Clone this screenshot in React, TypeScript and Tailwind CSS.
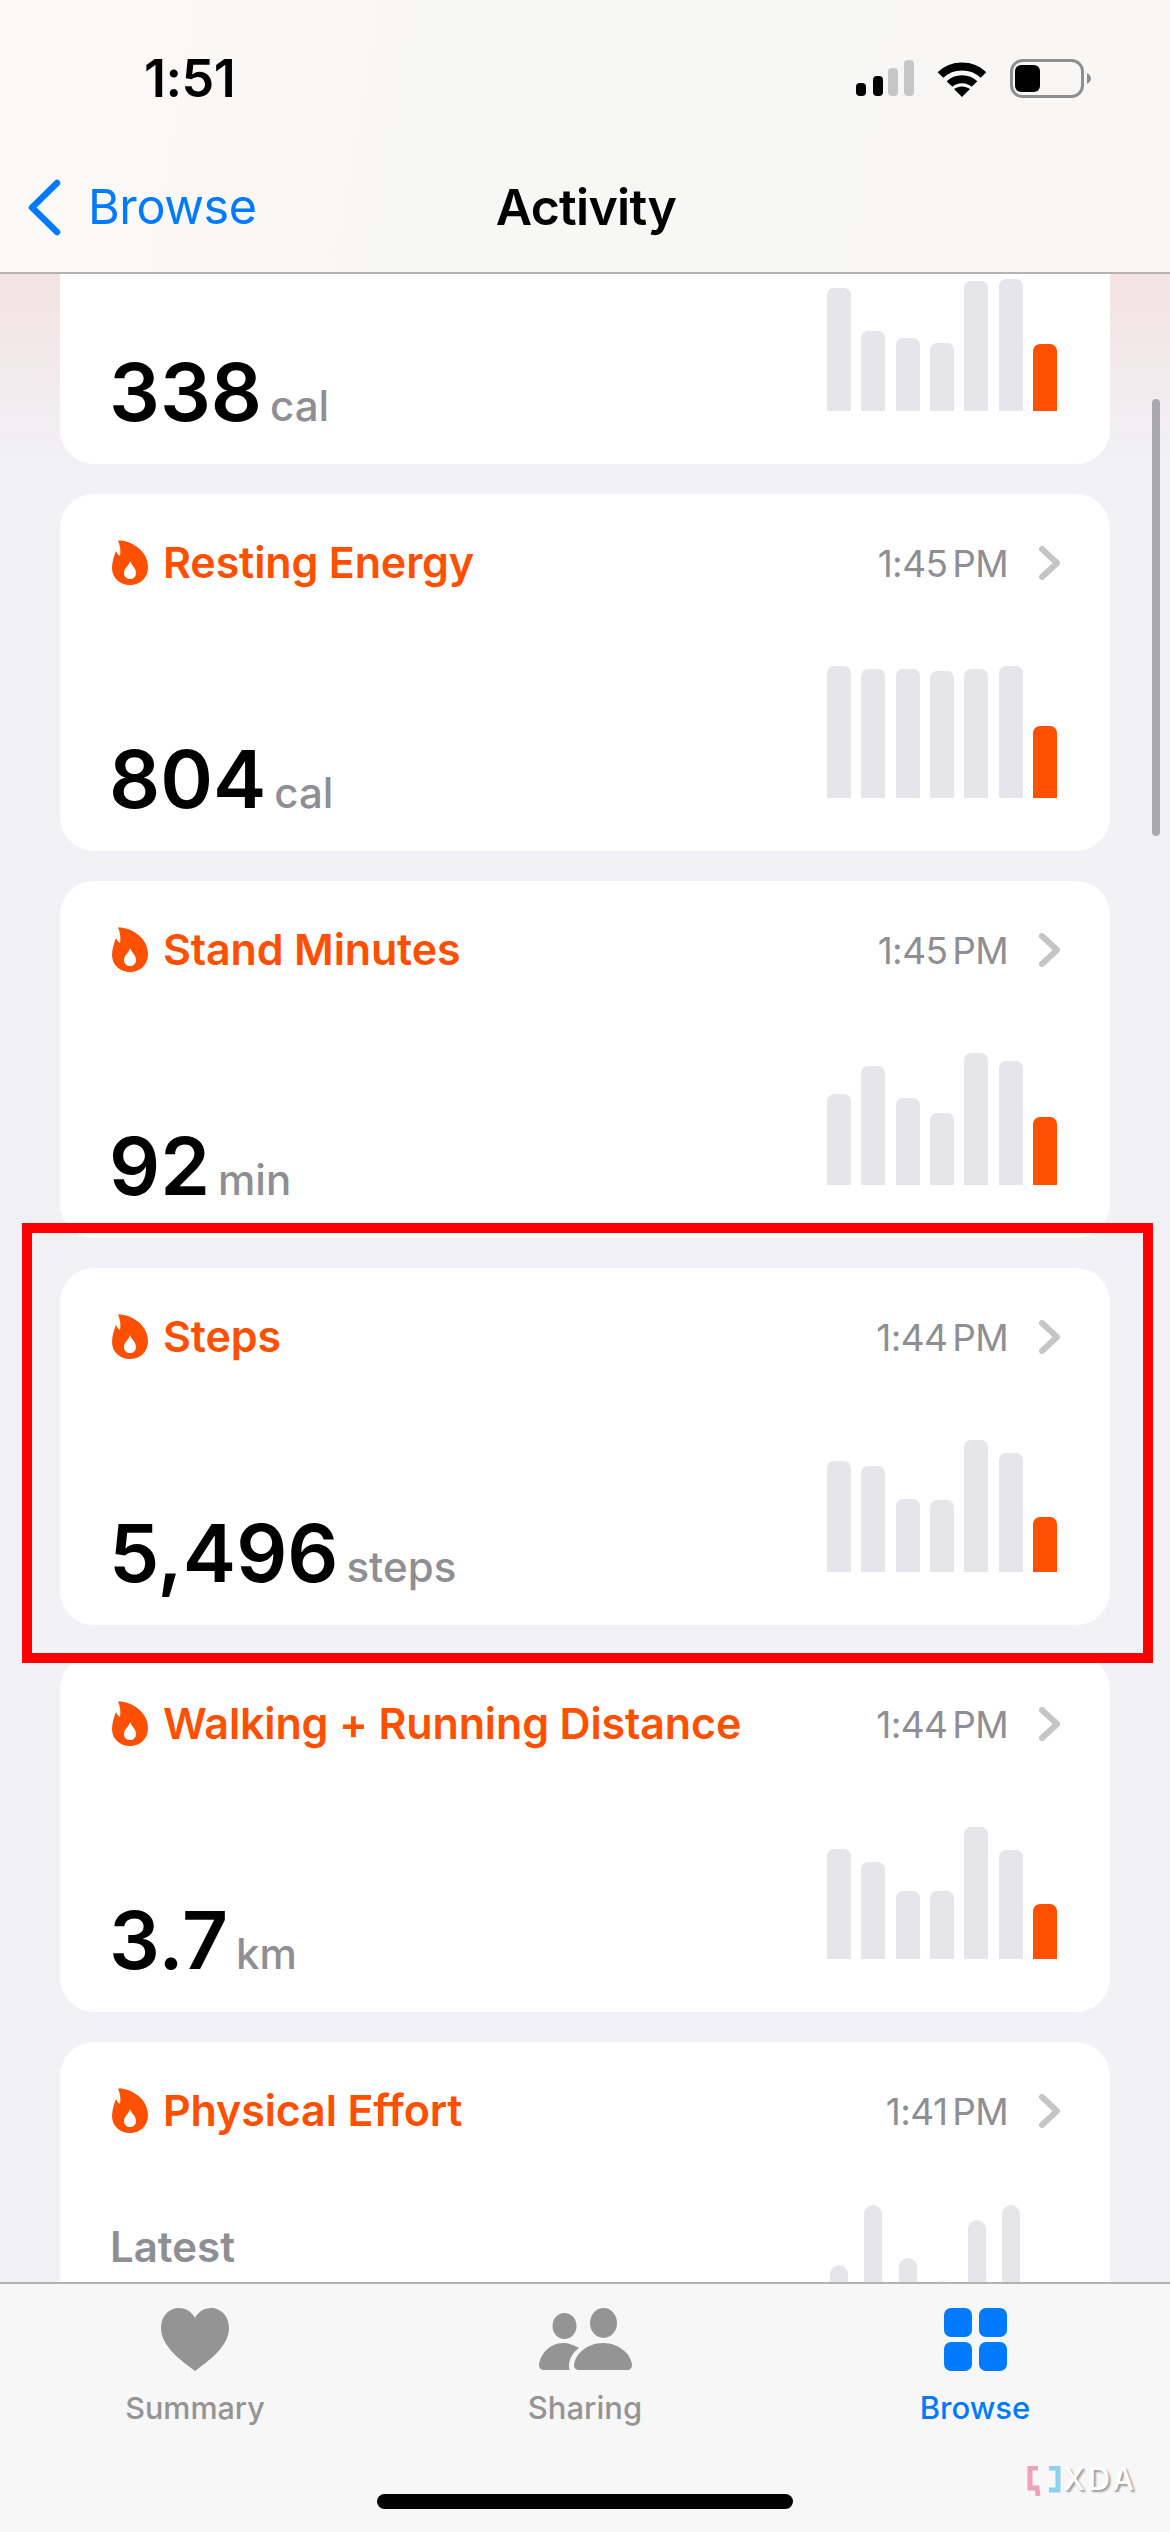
const metrics = [
  { title: "Resting Energy", time: "1:45 PM", value: "804", unit: "cal", bars: [132, 129, 129, 127, 129, 132, 72] },
  { title: "Stand Minutes", time: "1:45 PM", value: "92", unit: "min", bars: [91, 119, 87, 72, 132, 124, 68] },
  { title: "Steps", time: "1:44 PM", value: "5,496", unit: "steps", bars: [111, 106, 73, 72, 132, 119, 55] },
  { title: "Walking + Running Distance", time: "1:44 PM", value: "3.7", unit: "km", bars: [110, 97, 68, 68, 132, 109, 55] },
];

const effortBars = [81, 141, 88, 65, 126, 141];

function Flame() {
  return (
    <svg width="36" height="45" viewBox="0 0 36 45" className="shrink-0">
      <path
        fill="#ff4f00"
        fillRule="evenodd"
        d="M6 0.5C18 0 36 10 36 27C36 38 28 45 18 45C8 45 0 38 0 28C0 22 2 16 4 11C5 13 6 15 8 16C9 11 8 5 6 0.5ZM18 21C17 26 12 28 12 33C12 37 15 39 18 39C21 39 24 37 24 33C24 28 20 26 18 21Z"
      />
    </svg>
  );
}

function CardHeader({ title, time }: { title: string; time: string }) {
  return (
    <div className="flex items-center h-[46px]">
      <Flame />
      <span className="ml-[15px] text-[43px] leading-[46px] tracking-[-0.15px] font-semibold text-[#ff4f00] whitespace-nowrap">{title}</span>
      <span className="ml-auto mt-[3px] text-[37px] leading-[46px] tracking-[-0.6px] [word-spacing:-5px] text-[#8e8e93]">{time}</span>
      <svg width="21" height="34" viewBox="0 0 21 34" className="ml-[31px] mt-[2px]" fill="none">
        <path d="M3 3L18 17L3 31" stroke="#c5c5c7" strokeWidth="6" strokeLinecap="round" strokeLinejoin="round" />
      </svg>
    </div>
  );
}

function Bars({ bars }: { bars: number[] }) {
  return (
    <div className="flex items-end gap-[10.33px] mb-[23px] mr-[3px]">
      {bars.map((h, i) => (
        <div
          key={i}
          className={`w-[24px] rounded-t-[7px] ${i === bars.length - 1 ? "bg-[#ff4f00]" : "bg-[#e5e5ea]"}`}
          style={{ height: h }}
        />
      ))}
    </div>
  );
}

function Value({ value, unit }: { value: string; unit: string }) {
  return (
    <div className="flex items-baseline h-[88px] -ml-[3px] -mb-[2px] leading-[88px] whitespace-nowrap">
      <span className="text-[80px] font-semibold text-black">{value}</span>
      <span className="ml-[8px] text-[42px] font-medium text-[#8e8e93]">{unit}</span>
    </div>
  );
}

function MetricCard({ title, time, value, unit, bars }: (typeof metrics)[number]) {
  return (
    <div className="h-[357px] shrink-0 rounded-[34px] bg-white pt-[45px] pb-[30px] pl-[52px] pr-[50px] flex flex-col justify-between">
      <CardHeader title={title} time={time} />
      <div className="flex items-end justify-between">
        <Value value={value} unit={unit} />
        <Bars bars={bars} />
      </div>
    </div>
  );
}

export default function App() {
  return (
    <div className="relative w-[1170px] h-[2532px] overflow-hidden flex flex-col bg-[#f1f1f6] font-['Inter','Liberation_Sans',sans-serif]">
      {/* status bar + nav */}
      <header className="h-[274px] shrink-0 border-b-2 border-[#b5b2b1] bg-[linear-gradient(100deg,#fdf9f7,#f7f7f6_40%,#f8f7f6)]">
        <div className="h-[156px] flex items-center justify-between pl-[144px] pr-[79px]">
          <span className="pt-[2px] text-[52px] font-semibold tracking-[-0.5px] text-black">1:51</span>
          <div className="flex items-center">
            <svg width="58" height="36" viewBox="0 0 58 36">
              <rect x="0" y="23" width="10" height="13" rx="4" fill="#000" />
              <rect x="17" y="16" width="10" height="20" rx="4" fill="#000" />
              <rect x="32" y="8" width="10" height="28" rx="4" fill="#c6c6c6" />
              <rect x="48" y="0" width="10" height="36" rx="4" fill="#c6c6c6" />
            </svg>
            <svg width="50" height="37" viewBox="0 0 50 37" className="ml-[23px]" fill="none">
              <path d="M3.5 15C15 3.5 35 3.5 46.5 15" stroke="#000" strokeWidth="8" />
              <path d="M12.5 24C19 17.5 31 17.5 37.500 24" stroke="#000" strokeWidth="8" />
              <path d="M25 37L17 29C22 25.500 28 25.500 33 29Z" fill="#000" />
            </svg>
            <svg width="81" height="39" viewBox="0 0 81 39" className="ml-[23px]" fill="none">
              <rect x="1.500" y="1.500" width="71" height="36" rx="11" stroke="#8e8e8e" strokeWidth="3" />
              <rect x="5" y="6" width="25" height="27" rx="6" fill="#000" />
              <path d="M77 14C79 15 81 17 81 19.500C81 22 79 24 77 25Z" fill="#8e8e8e" />
            </svg>
          </div>
        </div>
        <nav className="h-[102px] grid grid-cols-3 items-center">
          <div className="flex items-center pl-[28px] gap-[27px]">
            <svg width="33" height="57" viewBox="0 0 33 57" fill="none">
              <path d="M29 4L4 28.500L29 53" stroke="#007aff" strokeWidth="6.500" strokeLinecap="round" strokeLinejoin="round" />
            </svg>
            <span className="text-[48.5px] tracking-[-0.4px] text-[#007aff]">Browse</span>
          </div>
          <span className="pl-[2px] text-center text-[50px] font-semibold tracking-[-0.7px] text-black">Activity</span>
        </nav>
      </header>

      {/* scrolled list */}
      <main className="flex-1 min-h-0 overflow-hidden bg-[linear-gradient(180deg,#f4e3e2_0px,#f1f1f6_190px)]">
        <div className="flex flex-col gap-[30px] mx-[60px] -mt-[167px]">
          <div className="h-[357px] shrink-0 rounded-[34px] bg-white pb-[30px] pl-[52px] pr-[50px] flex items-end justify-between">
            <Value value="338" unit="cal" />
            <Bars bars={[123, 80, 73, 68, 130, 132, 67]} />
          </div>
          {metrics.map((m) => (
            <MetricCard key={m.title} {...m} />
          ))}
          <div className="h-[357px] shrink-0 rounded-[34px] bg-white pt-[45px] pb-[30px] pl-[52px] pr-[50px] flex flex-col justify-between">
            <CardHeader title="Physical Effort" time="1:41 PM" />
            <div className="flex items-end justify-between">
              <span className="-ml-[2px] mb-[98px] text-[42px] leading-[48px] font-semibold text-[#8e8e93]">Latest</span>
              <div className="flex items-end gap-[16.4px] mb-[23px] mr-[40px]">
                {effortBars.map((h, i) => (
                  <div key={i} className="w-[18px] rounded-t-full bg-[#e5e5ea]" style={{ height: h }} />
                ))}
              </div>
            </div>
          </div>
        </div>
      </main>

      {/* tab bar */}
      <footer className="h-[250px] shrink-0 border-t-2 border-[#b5b2b1] bg-[#f7f7f7] pt-[24px]">
        <div className="grid grid-cols-3">
          <div className="flex flex-col items-center">
            <svg width="68" height="63" viewBox="0 0 68 63">
              <path fill="#949494" d="M34 63C22 54 0 39 0 20C0 8 8 0 18 0C25 0 31 4 34 10C37 4 43 0 50 0C60 0 68 8 68 20C68 39 46 54 34 63Z" />
            </svg>
            <span className="mt-[19px] text-[30.5px] leading-[36px] font-medium text-[#949494]">Summary</span>
          </div>
          <div className="flex flex-col items-center">
            <svg width="93" height="63" viewBox="0 0 93 63" fill="#949494">
              <ellipse cx="25.500" cy="18" rx="12" ry="13" />
              <ellipse cx="64.500" cy="15" rx="13.500" ry="15" />
              <path d="M5 62C2 62 0 60 0 57C1 46 11 35 24 35C30 35 35 37 40 40C34 44 30 51 30 58C30 60 30 61 31 62Z" />
              <path d="M41 62C37 62 35 60 35 57C36 46 48 35 64 35C80 35 92 46 93 57C93 60 91 62 88 62Z" />
            </svg>
            <span className="mt-[19px] text-[31px] leading-[36px] font-medium text-[#949494]">Sharing</span>
          </div>
          <div className="flex flex-col items-center">
            <div className="grid grid-cols-2 gap-x-[7px] gap-y-[5px] w-[63px] h-[63px]">
              <div className="rounded-[7px] bg-[#007aff]" />
              <div className="rounded-[7px] bg-[#007aff]" />
              <div className="rounded-[7px] bg-[#007aff]" />
              <div className="rounded-[7px] bg-[#007aff]" />
            </div>
            <span className="mt-[19px] text-[31px] leading-[36px] font-medium text-[#007aff]">Browse</span>
          </div>
        </div>
        <div className="mt-[68px] mx-auto w-[416px] h-[15px] rounded-full bg-black" />
      </footer>

      {/* overlays */}
      <div className="absolute left-[1152px] top-[399px] w-[8px] h-[437px] rounded-full bg-[#a9a9ac]" />
      <div className="absolute left-[22px] top-[1223px] w-[1131px] h-[440px] border-[10px] border-[#ff0000]" />
      <div className="absolute left-[1027px] top-[2466px] flex items-start">
        <svg width="34" height="32" viewBox="0 0 34 32" fill="none">
          <path d="M11 2H3V22H10L11 30" stroke="#f0a0b8" strokeWidth="5" />
          <path d="M22 2H31V24H22" stroke="#8fd0f0" strokeWidth="5" />
        </svg>
        <span className="ml-[2px] text-[31px] leading-[26px] tracking-[3px] font-medium text-white [text-shadow:2px_2px_2px_#9a9a9a]">XDA</span>
      </div>
    </div>
  );
}
